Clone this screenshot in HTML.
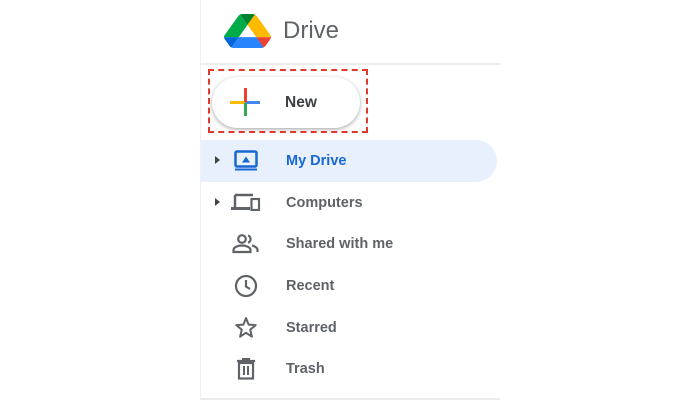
<!DOCTYPE html>
<html><head><style>
body{margin:0;width:700px;height:400px;background:#fff;position:relative;overflow:hidden;font-family:"Liberation Sans",Arial,sans-serif}
.a{position:absolute}
.lbl{position:absolute;left:286px;font-size:14.5px;font-weight:bold;color:#5f6368;line-height:20px}
</style></head><body>
<div class="a" style="left:200px;top:0;width:1px;height:400px;background:#f1f1f1"></div>
<svg class="a" style="left:224px;top:14px" width="47" height="34" viewBox="0 0 87.3 78" preserveAspectRatio="none">
<path d="M6.6 66.85l3.85 6.65c.8 1.4 1.950 2.5 3.3 3.3l13.75-23.8H0c0 1.55.4 3.1 1.2 4.5z" fill="#0066da"/>
<path d="M43.65 25L29.9 1.2c-1.35.8-2.5 1.9-3.3 3.3L1.2 48.5A9 9 0 000 53h27.5z" fill="#00ac47"/>
<path d="M73.55 76.8c1.35-.8 2.5-1.9 3.3-3.3l1.6-2.75 7.65-13.25c.8-1.4 1.2-2.95 1.2-4.5H59.8l5.850 11.5z" fill="#ea4335"/>
<path d="M43.65 25L57.4 1.2C56.05.4 54.5 0 52.9 0H34.4c-1.6 0-3.15.45-4.5 1.2z" fill="#00832d"/>
<path d="M59.8 53H27.5L13.75 76.8c1.35.8 2.9 1.2 4.5 1.2h50.8c1.6 0 3.15-.45 4.5-1.2z" fill="#2684fc"/>
<path d="M73.4 26.5L60.7 4.5c-.8-1.4-1.95-2.5-3.3-3.3L43.65 25 59.8 53h27.45c0-1.55-.4-3.1-1.2-4.5z" fill="#ffba00"/>
</svg>
<div class="a" style="left:283px;top:17px;font-size:24px;color:#5f6368">Drive</div>
<div class="a" style="left:200px;top:63px;width:300px;height:2px;background:#ececec"></div>
<div class="a" style="left:200px;top:398px;width:300px;height:2px;background:#ececec"></div>
<div class="a" style="left:212px;top:77px;width:148px;height:51px;border-radius:26px;background:#fff;box-shadow:0 1px 3px rgba(60,64,67,.35),0 2px 6px rgba(60,64,67,.15)"></div>
<div class="a" style="left:208px;top:69px;width:156px;height:60px;border:2px dashed #e03a2f"></div>
<div class="a" style="left:230px;top:101px;width:15px;height:3px;background:#fbbc04"></div>
<div class="a" style="left:245px;top:101px;width:15px;height:3px;background:#4285f4"></div>
<div class="a" style="left:244px;top:88px;width:3px;height:14px;background:#ea4335"></div>
<div class="a" style="left:244px;top:103px;width:3px;height:13px;background:#34a853"></div>
<div class="a" style="left:285px;top:94px;font-size:15.5px;font-weight:bold;color:#3c4043">New</div>
<div class="a" style="left:201px;top:140px;width:296px;height:42px;background:#e8f0fe;border-radius:0 21px 21px 0"></div>
<div class="a" style="left:215px;top:156px;width:0;height:0;border-left:5px solid #444;border-top:4px solid transparent;border-bottom:4px solid transparent"></div>
<div class="a" style="left:215px;top:198px;width:0;height:0;border-left:5px solid #444;border-top:4px solid transparent;border-bottom:4px solid transparent"></div>
<svg class="a" style="left:234px;top:150px" width="24" height="22" viewBox="0 0 24 22"><rect x="1.5" y="1.5" width="21" height="15" rx="1.5" fill="none" stroke="#1967d2" stroke-width="2.5"/><rect x="1" y="18.5" width="22" height="2" fill="#1967d2"/><path d="M8 12.5h8l-4-6z" fill="#1967d2"/></svg>
<div class="lbl" style="top:151px;color:#1967d2">My Drive</div>
<svg class="a" style="left:231px;top:193px" width="30" height="18" viewBox="0 0 30 18"><path d="M4 2h18M4 2v12" stroke="#5f6368" stroke-width="2.5" fill="none"/><rect x="0" y="14" width="19" height="3" fill="#5f6368"/><rect x="20.5" y="6" width="7.5" height="11" fill="none" stroke="#5f6368" stroke-width="2.2"/></svg>
<div class="lbl" style="top:193px">Computers</div>
<svg class="a" style="left:232px;top:234px" width="28" height="20" viewBox="0 0 28 20"><circle cx="10" cy="5" r="3.8" fill="none" stroke="#5f6368" stroke-width="2.2"/><path d="M1.5 18v-2c0-3 5-4.5 8.5-4.5s8.5 1.5 8.5 4.5v2z" fill="none" stroke="#5f6368" stroke-width="2.2"/><path d="M16 1.5a3.8 3.8 0 010 7.2M20 11.5c3 .8 5.5 2 5.5 4.5v2" fill="none" stroke="#5f6368" stroke-width="2.2"/></svg>
<div class="lbl" style="top:234px">Shared with me</div>
<svg class="a" style="left:234px;top:274px" width="24" height="24" viewBox="0 0 24 24"><circle cx="12" cy="12" r="10" fill="none" stroke="#5f6368" stroke-width="2.2"/><path d="M12 6v6.5l4 2.5" fill="none" stroke="#5f6368" stroke-width="2.2"/></svg>
<div class="lbl" style="top:276px">Recent</div>
<svg class="a" style="left:234px;top:316px" width="24" height="23" viewBox="0 0 24 23"><path d="M12 2l2.6 6.6 7.1.5-5.5 4.6 1.7 6.9L12 16.8l-5.9 3.8 1.7-6.9L2.3 9.1l7.1-.5z" fill="none" stroke="#5f6368" stroke-width="2" stroke-linejoin="round"/></svg>
<div class="lbl" style="top:318px">Starred</div>
<svg class="a" style="left:236px;top:358px" width="20" height="22" viewBox="0 0 20 22"><path d="M1 3h18M7 3V1h6v2" stroke="#5f6368" stroke-width="2.2" fill="none"/><rect x="3" y="5" width="14" height="15.5" fill="none" stroke="#5f6368" stroke-width="2.2"/><path d="M8 8v9M12 8v9" stroke="#5f6368" stroke-width="2"/></svg>
<div class="lbl" style="top:359px">Trash</div>
</body></html>
